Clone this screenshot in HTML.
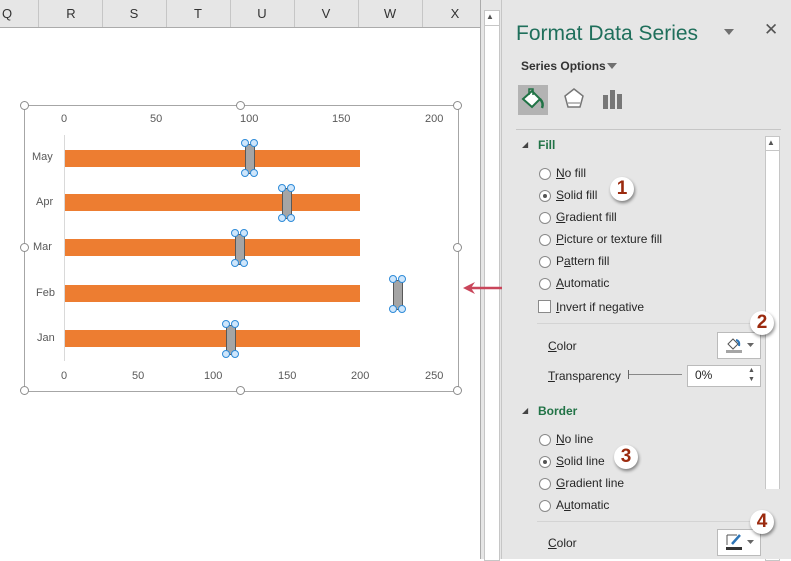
<html><head><style>
body{margin:0;width:791px;height:559px;overflow:hidden;background:#fff;font-family:"Liberation Sans",sans-serif;position:relative}
.a{position:absolute}
.hdr{left:0;top:0;width:481px;height:27px;background:#e6e6e6;border-bottom:1px solid #ababab}
.col{top:6px;font-size:13px;color:#333;width:20px;text-align:center}
.vl{top:0;width:1px;height:27px;background:#c6c6c6}
.t{font-size:11px;color:#595959}
.bar{left:65px;width:295px;height:17px;background:#ed7d31}
.mk{width:8px;background:#a5a5a5;border:1px solid #595959}
.h{width:6px;height:6px;border-radius:50%;border:1px solid #2e8bd8;background:#cfe6fb}
.ch{width:7px;height:7px;border-radius:50%;border:1.5px solid #8c8c8c;background:#fff}
.p{font-size:12px;color:#262626}
.r{width:10px;height:10px;border-radius:50%;border:1px solid #8a8a8a;background:#fff}
.r.on::after{content:"";position:absolute;left:3px;top:3px;width:4px;height:4px;border-radius:50%;background:#555}
.b{width:24px;height:24px;border-radius:50%;background:#fff;box-shadow:1px 2px 3px rgba(0,0,0,.45);color:#9b2a0e;font-weight:bold;font-size:19px;text-align:center;line-height:24px}
.sec{font-size:12px;font-weight:bold;color:#217346}
.sep{left:537px;width:225px;height:1px;background:#d4d4d4}
.tri{width:0;height:0;border-left:5px solid transparent;border-right:5px solid transparent;border-top:6px solid #707070}
</style></head><body>
<div class="a hdr"></div>
<div class="a col" style="left:-3px">Q</div><div class="a vl" style="left:38px"></div>
<div class="a col" style="left:61px">R</div><div class="a vl" style="left:102px"></div>
<div class="a col" style="left:124px">S</div><div class="a vl" style="left:166px"></div>
<div class="a col" style="left:188px">T</div><div class="a vl" style="left:230px"></div>
<div class="a col" style="left:252px">U</div><div class="a vl" style="left:294px"></div>
<div class="a col" style="left:316px">V</div><div class="a vl" style="left:358px"></div>
<div class="a col" style="left:380px">W</div><div class="a vl" style="left:422px"></div>
<div class="a col" style="left:445px">X</div>
<div class="a" style="left:480px;top:0;width:1px;height:559px;background:#ababab"></div>
<div class="a" style="left:481px;top:0;width:20px;height:559px;background:#e6e6e6"></div>
<div class="a" style="left:484px;top:10px;width:14px;height:549px;background:#fff;border:1px solid #c6c6c6"></div>
<div class="a" style="left:486px;top:12px;font-size:8px;color:#555">▲</div>
<div class="a" style="left:484px;top:25px;width:15px;height:1px;background:#c6c6c6"></div>
<div class="a" style="left:501px;top:0;width:1px;height:559px;background:#c6c6c6"></div>
<!-- chart -->
<div class="a" style="left:24px;top:105px;width:433px;height:285px;border:1px solid #a6a6a6"></div>
<div class="a" style="left:64px;top:135px;width:1px;height:226px;background:#d9d9d9"></div>
<div class="a t" style="left:61px;top:113px">0</div><div class="a t" style="left:150px;top:113px">50</div><div class="a t" style="left:240px;top:113px">100</div><div class="a t" style="left:332px;top:113px">150</div><div class="a t" style="left:425px;top:113px">200</div>
<div class="a t" style="left:61px;top:370px">0</div><div class="a t" style="left:132px;top:370px">50</div><div class="a t" style="left:204px;top:370px">100</div><div class="a t" style="left:278px;top:370px">150</div><div class="a t" style="left:351px;top:370px">200</div><div class="a t" style="left:425px;top:370px">250</div>
<div class="a t" style="left:32px;top:151px">May</div><div class="a t" style="left:36px;top:196px">Apr</div><div class="a t" style="left:33px;top:241px">Mar</div><div class="a t" style="left:36px;top:287px">Feb</div><div class="a t" style="left:37px;top:332px">Jan</div>
<div class="a bar" style="top:150px"></div><div class="a bar" style="top:194px"></div><div class="a bar" style="top:239px"></div><div class="a bar" style="top:285px"></div><div class="a bar" style="top:330px"></div>
<div class="a mk" style="left:245px;top:144px;height:28px"></div>
<div class="a mk" style="left:282px;top:188px;height:29px"></div>
<div class="a mk" style="left:235px;top:234px;height:29px"></div>
<div class="a mk" style="left:393px;top:280px;height:28px"></div>
<div class="a mk" style="left:226px;top:325px;height:28px"></div>
<div class="a h" style="left:241px;top:139px"></div><div class="a h" style="left:250px;top:139px"></div><div class="a h" style="left:241px;top:169px"></div><div class="a h" style="left:250px;top:169px"></div>
<div class="a h" style="left:278px;top:184px"></div><div class="a h" style="left:287px;top:184px"></div><div class="a h" style="left:278px;top:214px"></div><div class="a h" style="left:287px;top:214px"></div>
<div class="a h" style="left:231px;top:229px"></div><div class="a h" style="left:240px;top:229px"></div><div class="a h" style="left:231px;top:259px"></div><div class="a h" style="left:240px;top:259px"></div>
<div class="a h" style="left:389px;top:275px"></div><div class="a h" style="left:398px;top:275px"></div><div class="a h" style="left:389px;top:305px"></div><div class="a h" style="left:398px;top:305px"></div>
<div class="a h" style="left:222px;top:320px"></div><div class="a h" style="left:231px;top:320px"></div><div class="a h" style="left:222px;top:350px"></div><div class="a h" style="left:231px;top:350px"></div>
<div class="a ch" style="left:20px;top:101px"></div><div class="a ch" style="left:236px;top:101px"></div><div class="a ch" style="left:453px;top:101px"></div>
<div class="a ch" style="left:20px;top:243px"></div><div class="a ch" style="left:453px;top:243px"></div>
<div class="a ch" style="left:20px;top:386px"></div><div class="a ch" style="left:236px;top:386px"></div><div class="a ch" style="left:453px;top:386px"></div>
<svg class="a" style="left:460px;top:280px" width="45" height="16"><path d="M44 8H8" stroke="#c9455a" stroke-width="2.5"/><path d="M3 8L15 2L11 8L15 14Z" fill="#c9455a"/></svg>
<!-- pane -->
<div class="a" style="left:502px;top:0;width:289px;height:559px;background:#e6e6e6"></div>
<div class="a" style="left:516px;top:22px;font-size:21px;color:#1f6f5b">Format Data Series</div>
<div class="a tri" style="left:724px;top:29px"></div>
<div class="a" style="left:764px;top:20px;font-size:17px;color:#555">✕</div>
<div class="a" style="left:521px;top:59px;font-size:12px;font-weight:bold;color:#333">Series Options</div>
<div class="a tri" style="left:607px;top:63px"></div>
<div class="a" style="left:518px;top:85px;width:30px;height:30px;background:#b3b3b3"></div>
<svg class="a" style="left:518px;top:85px" width="30" height="30"><path d="M5 14L14 6L22 14L14 22Z" fill="#fff" stroke="#217346" stroke-width="2"/><path d="M11 10V4h4v6" stroke="#217346" fill="none" stroke-width="1.5"/><path d="M22 14q4 4 2 9" stroke="#217346" stroke-width="2.5" fill="none"/></svg>
<svg class="a" style="left:562px;top:86px" width="24" height="26"><path d="M12 3L21 10L18 21H6L3 10Z" fill="#fff" stroke="#777" stroke-width="1.5"/><path d="M6 17H18" stroke="#777"/></svg>
<svg class="a" style="left:602px;top:88px" width="22" height="22"><rect x="1" y="7" width="5" height="14" fill="#777"/><rect x="8" y="2" width="5" height="19" fill="#777"/><rect x="15" y="6" width="5" height="15" fill="#777"/></svg>
<div class="a" style="left:516px;top:129px;width:265px;height:1px;background:#c6c6c6"></div>
<div class="a" style="left:765px;top:136px;width:13px;height:423px;background:#fff;border:1px solid #c6c6c6"></div>
<div class="a" style="left:767px;top:138px;font-size:8px;color:#555">▲</div>
<div class="a" style="left:765px;top:150px;width:15px;height:1px;background:#c6c6c6"></div>
<div class="a" style="left:765px;top:489px;width:15px;height:70px;background:#e6e6e6"></div>
<div class="a" style="left:522px;top:140px;font-size:8px;color:#444">◢</div>
<div class="a sec" style="left:538px;top:138px">Fill</div>
<div class="a r" style="left:539px;top:168px"></div><div class="a p" style="left:556px;top:166px"><u>N</u>o fill</div>
<div class="a r on" style="left:539px;top:190px"></div><div class="a p" style="left:556px;top:188px"><u>S</u>olid fill</div>
<div class="a r" style="left:539px;top:212px"></div><div class="a p" style="left:556px;top:210px"><u>G</u>radient fill</div>
<div class="a r" style="left:539px;top:234px"></div><div class="a p" style="left:556px;top:232px"><u>P</u>icture or texture fill</div>
<div class="a r" style="left:539px;top:256px"></div><div class="a p" style="left:556px;top:254px">P<u>a</u>ttern fill</div>
<div class="a r" style="left:539px;top:278px"></div><div class="a p" style="left:556px;top:276px"><u>A</u>utomatic</div>
<div class="a" style="left:538px;top:300px;width:11px;height:11px;border:1px solid #8a8a8a;background:#fff"></div><div class="a p" style="left:556px;top:300px"><u>I</u>nvert if negative</div>
<div class="a sep" style="top:323px"></div>
<div class="a p" style="left:548px;top:339px"><u>C</u>olor</div>
<div class="a" style="left:717px;top:332px;width:42px;height:25px;background:#fff;border:1px solid #bbb"></div>
<svg class="a" style="left:724px;top:335px" width="34" height="20"><path d="M4 9L9 4L14 9L9 14Z" fill="#fff" stroke="#555"/><path d="M12 5q4 1 3 6" stroke="#2e75b6" stroke-width="2" fill="none"/><rect x="2" y="15" width="16" height="3" fill="#a5a5a5"/><path d="M23 8h7l-3.5 4z" fill="#666"/></svg>
<div class="a p" style="left:548px;top:369px"><u>T</u>ransparency</div>
<div class="a" style="left:628px;top:370px;width:1px;height:9px;background:#666"></div>
<div class="a" style="left:629px;top:374px;width:53px;height:1px;background:#888"></div>
<div class="a" style="left:687px;top:365px;width:72px;height:20px;background:#fff;border:1px solid #bbb"></div>
<div class="a p" style="left:695px;top:368px">0%</div>
<div class="a" style="left:748px;top:366px;font-size:7px;color:#555;line-height:9px">▲<br>▼</div>
<div class="a" style="left:522px;top:406px;font-size:8px;color:#444">◢</div>
<div class="a sec" style="left:538px;top:404px">Border</div>
<div class="a r" style="left:539px;top:434px"></div><div class="a p" style="left:556px;top:432px"><u>N</u>o line</div>
<div class="a r on" style="left:539px;top:456px"></div><div class="a p" style="left:556px;top:454px"><u>S</u>olid line</div>
<div class="a r" style="left:539px;top:478px"></div><div class="a p" style="left:556px;top:476px"><u>G</u>radient line</div>
<div class="a r" style="left:539px;top:500px"></div><div class="a p" style="left:556px;top:498px">A<u>u</u>tomatic</div>
<div class="a sep" style="top:521px"></div>
<div class="a p" style="left:548px;top:536px"><u>C</u>olor</div>
<div class="a" style="left:717px;top:529px;width:42px;height:25px;background:#fff;border:1px solid #bbb"></div>
<svg class="a" style="left:724px;top:532px" width="34" height="20"><path d="M3 3H13M3 3V13" stroke="#555" fill="none"/><path d="M8 12L16 3" stroke="#2e75b6" stroke-width="2.5"/><rect x="2" y="15" width="16" height="3" fill="#333"/><path d="M23 8h7l-3.5 4z" fill="#666"/></svg>
<div class="a b" style="left:610px;top:177px">1</div>
<div class="a b" style="left:750px;top:311px">2</div>
<div class="a b" style="left:614px;top:445px">3</div>
<div class="a b" style="left:750px;top:510px">4</div>
</body></html>
